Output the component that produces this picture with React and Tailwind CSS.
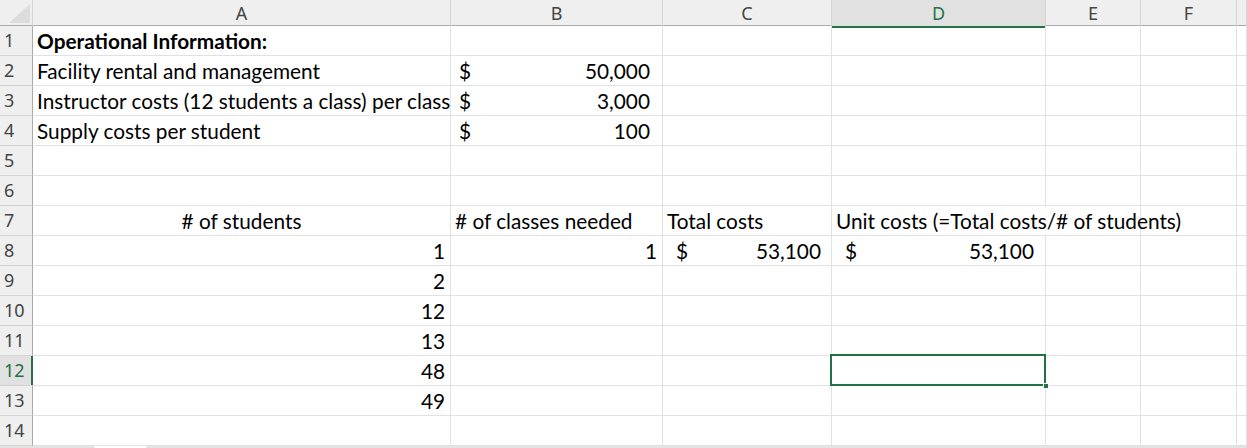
import React from 'react';

const cols = ['A', 'B', 'C', 'D', 'E', 'F', ''];
const colTemplate = 'grid grid-cols-[33px_418px_212px_169px_214px_95px_96px_1fr]';

// accounting style cell: "$" on the left, amount on the right
const acct = (amount, left, right) => ({ kind: 'acct', amount, left, right });

const rows = [
  { A: { t: 'Operational Information:', bold: true } },
  { A: { t: 'Facility rental and management' }, B: acct('50,000', 'pl-[8px]', 'pr-[12px]') },
  { A: { t: 'Instructor costs (12 students a class) per class' }, B: acct('3,000', 'pl-[8px]', 'pr-[12px]') },
  { A: { t: 'Supply costs per student' }, B: acct('100', 'pl-[8px]', 'pr-[12px]') },
  {},
  {},
  {
    A: { t: '# of students', align: 'center' },
    B: { t: '# of classes needed' },
    C: { t: 'Total costs' },
    D: { t: 'Unit costs (=Total costs/# of students)', overflow: true },
  },
  {
    A: { t: '1', align: 'right' },
    B: { t: '1', align: 'right' },
    C: acct('53,100', 'pl-[13px]', 'pr-[10px]'),
    D: acct('53,100', 'pl-[13px]', 'pr-[11px]'),
  },
  { A: { t: '2', align: 'right' } },
  { A: { t: '12', align: 'right' } },
  { A: { t: '13', align: 'right' } },
  { A: { t: '48', align: 'right' } },
  { A: { t: '49', align: 'right' } },
  {},
];

const selRow = 12;
const selCol = 'D';

const Cell = ({ data, col, rowNum }) => {
  const selected = rowNum === selRow && col === selCol;
  let border = 'border-r border-b border-[#e1e1e1]';
  if (data && data.overflow) border = 'border-r border-b border-[#e1e1e1] border-r-white';

  let content = null;
  if (data && data.kind === 'acct') {
    content = (
      <div className={`flex w-full justify-between ${data.left} ${data.right}`}>
        <span>$</span>
        <span>{data.amount}</span>
      </div>
    );
  } else if (data) {
    const align =
      data.align === 'right' ? 'justify-end pr-[5px]' : data.align === 'center' ? 'justify-center' : 'justify-start pl-[4px]';
    content = (
      <div className={`flex w-full whitespace-nowrap ${align} ${data.bold ? 'font-bold' : ''}`}>
        <span className="relative z-10">{data.t}</span>
      </div>
    );
  }

  return (
    <div className={`relative flex h-[30px] items-center ${border}`}>
      {content}
      {selected && (
        <>
          <div className="pointer-events-none absolute -left-[2px] -top-[2px] -bottom-[1px] -right-[1px] z-20 border-2 border-[#217346]" />
          <div className="absolute -bottom-[4px] -right-[4px] z-30 h-[6px] w-[6px] border border-white bg-[#217346]" />
        </>
      )}
    </div>
  );
};

export default function App() {
  return (
    <div className="h-[448px] w-[1247px] overflow-hidden bg-white text-[20.8px] text-black [font-family:Lato,sans-serif]">
      {/* column headers */}
      <div className={`${colTemplate} h-[26px] border-b border-[#ababab] bg-[#efefef] text-[18px] text-[#444] [font-family:'Noto_Sans',sans-serif]`}>
        <div className="relative border-r border-[#d4d4d4]">
          <svg className="absolute left-[9px] top-[4px]" width="21" height="19" viewBox="0 0 21 19">
            <polygon points="21,0 21,19 0,19" fill="#dcdcdc" />
          </svg>
        </div>
        {cols.map((c, i) => (
          <div
            key={i}
            className={`flex items-center justify-center border-r border-[#d4d4d4] ${
              c === selCol ? 'relative bg-[#e1e1e1] text-[#217346]' : ''
            }`}
          >
            {c}
            {c === selCol && <div className="absolute -bottom-[1px] left-0 right-0 h-[2px] bg-[#217346]" />}
          </div>
        ))}
      </div>

      {/* rows */}
      {rows.map((r, i) => {
        const n = i + 1;
        const active = n === selRow;
        return (
          <div key={n} className={colTemplate}>
            <div
              className={`relative flex h-[30px] items-center border-b border-r border-[#d4d4d4] border-r-[#ababab] pl-[4px] text-[18px] [font-family:'Noto_Sans',sans-serif] ${
                active ? 'bg-[#e1e1e1] text-[#217346]' : 'bg-[#efefef] text-[#444]'
              }`}
            >
              {n}
              {active && <div className="absolute -right-[1px] top-0 bottom-0 w-[2px] bg-[#217346]" />}
            </div>
            {cols.map((c, j) => (
              <Cell key={j} data={c ? r[c] : null} col={c} rowNum={n} />
            ))}
          </div>
        );
      })}

      {/* bottom scroll strip */}
      <div className="flex h-[2px] w-full">
        <div className="h-full w-[95px] rounded-tr-[4px] bg-[#e3e3e3]" />
        <div className="h-full w-[51px] bg-white" />
        <div className="h-full flex-1 rounded-tl-[4px] bg-[#e3e3e3]" />
      </div>
    </div>
  );
}
